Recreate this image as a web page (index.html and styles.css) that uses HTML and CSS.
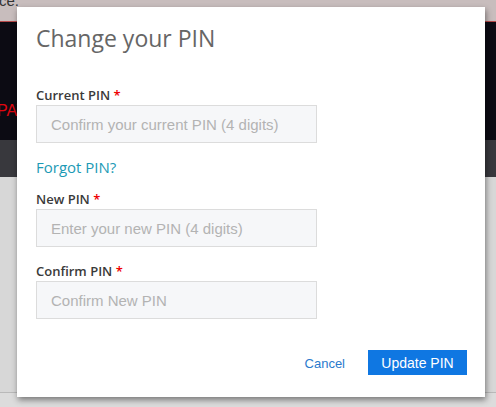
FILE: index.html
```html
<!DOCTYPE html>
<html>
<head>
<meta charset="utf-8">
<link rel="stylesheet" href="styles.css">
</head>
<body>
<div class="page">
  <div class="topbar"><span class="topbar-text">ce.</span></div>
  <div class="hero"><span class="hero-text">PAY</span></div>
  <div class="subnav"></div>
  <div class="content"></div>
  <div class="footer"></div>
</div>
<div class="modal">
  <h1 class="modal-title">Change your PIN</h1>
  <div class="field">
    <label class="field-label">Current PIN <span class="req">*</span></label>
    <input class="field-input" type="password" placeholder="Confirm your current PIN (4 digits)">
  </div>
  <a class="forgot" href="#">Forgot PIN?</a>
  <div class="field field-mid">
    <label class="field-label">New PIN <span class="req">*</span></label>
    <input class="field-input" type="password" placeholder="Enter your new PIN (4 digits)">
  </div>
  <div class="field field-last">
    <label class="field-label">Confirm PIN <span class="req">*</span></label>
    <input class="field-input" type="password" placeholder="Confirm New PIN">
  </div>
  <div class="actions">
    <a class="cancel" href="#">Cancel</a>
    <button class="primary" type="button">Update PIN</button>
  </div>
</div>
</body>
</html>
```

FILE: styles.css
```css
html, body {
  margin: 0;
  padding: 0;
  height: 100%;
  overflow: hidden;
}
body {
  font-family: "Open Sans", "Liberation Sans", sans-serif;
  background: #d7d7d7;
  position: relative;
}
.page {
  display: flex;
  flex-direction: column;
  height: 407px;
}
.topbar {
  height: 22px;
  background: #c8bdbd;
  border-bottom: 1px solid #b84a4a;
  box-sizing: border-box;
  overflow: hidden;
}
.topbar-text {
  display: block;
  margin-top: -9px;
  margin-left: -1px;
  font-family: "Liberation Sans", sans-serif;
  font-size: 15px;
  color: #333;
  line-height: 20px;
}
.hero {
  height: 118px;
  background: #0c0b13;
  overflow: hidden;
}
.hero-text {
  display: block;
  margin-top: 80px;
  margin-left: -3px;
  font-family: "Liberation Sans", sans-serif;
  font-size: 16px;
  color: #e0060f;
}
.subnav {
  height: 37px;
  background: #38383d;
}
.content {
  flex: 1;
  background: #d7d7d7;
  border-bottom: 1px solid #b9b9b9;
}
.footer {
  height: 14px;
  background: #dcdcdc;
}
.modal {
  position: absolute;
  left: 17px;
  top: 7px;
  width: 468px;
  height: 390px;
  box-sizing: border-box;
  background: #fff;
  box-shadow: 1px 3px 6px rgba(0, 0, 0, 0.45);
  padding: 15px 18px 0 19px;
}
.modal-title {
  margin: 0 0 32px;
  font-size: 23px;
  font-weight: 400;
  line-height: normal;
  color: #666;
}
.field {
  display: flex;
  flex-direction: column;
  margin-bottom: 14px;
}
.field-mid {
  margin-bottom: 15px;
}
.field-last {
  margin-bottom: 32px;
}
.field-label {
  font-size: 13px;
  font-weight: 600;
  color: #3a3a3a;
  line-height: normal;
  margin-bottom: 1px;
}
.req {
  color: #e00;
}
.field-input {
  width: 281px;
  height: 38px;
  box-sizing: border-box;
  border: 1px solid #dcdcdc;
  background: #f6f7f9;
  padding: 0 14px;
  font-family: "Liberation Sans", sans-serif;
  font-size: 15px;
  color: #333;
  outline: none;
}
.field-input::placeholder {
  color: #b3b3b3;
}
.forgot {
  display: block;
  font-size: 15px;
  line-height: normal;
  color: #1c9ab5;
  text-decoration: none;
  margin-bottom: 13px;
}
.actions {
  display: flex;
  justify-content: flex-end;
  align-items: center;
  gap: 23px;
}
.cancel {
  font-family: "Liberation Sans", sans-serif;
  font-size: 13px;
  color: #2a7acd;
  text-decoration: none;
}
.primary {
  width: 99px;
  height: 25px;
  margin-top: -1px;
  border: none;
  border-radius: 0;
  background: #0f77e2;
  color: #fff;
  font-family: "Liberation Sans", sans-serif;
  font-size: 14px;
  padding: 0;
}
```
